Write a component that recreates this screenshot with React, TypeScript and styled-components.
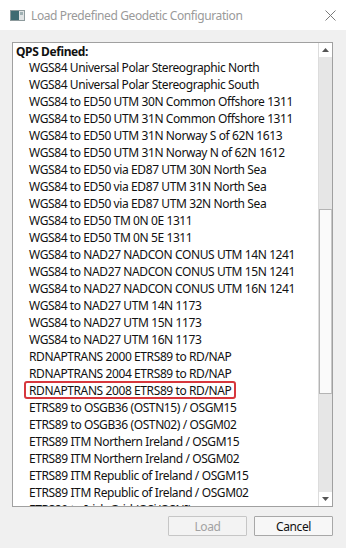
import styled, { createGlobalStyle } from "styled-components";

const GlobalStyle = createGlobalStyle`
  html, body {
    margin: 0;
    padding: 0;
    background: #f0f0f0;
  }
  * {
    box-sizing: border-box;
  }
`;

const Window = styled.div`
  width: 346px;
  height: 548px;
  display: flex;
  flex-direction: column;
  background: #f0f0f0;
  font-family: "Noto Sans", "Open Sans", sans-serif;
  font-size: 12px;
  letter-spacing: -0.4px;
  color: #111;
  overflow: hidden;
`;

const TitleBar = styled.div`
  height: 30px;
  flex: none;
  background: #ffffff;
  display: flex;
  align-items: center;
  padding: 0 10px;
`;

const TitleText = styled.div`
  flex: 1;
  margin-left: 6px;
  color: #9a9a9a;
  font-size: 12px;
  white-space: nowrap;
`;

const Body = styled.div`
  flex: 1;
  display: flex;
  flex-direction: column;
  padding: 12px 13px 12px 12px;
  min-height: 0;
`;

const ListBox = styled.div`
  height: 465px;
  flex: none;
  display: flex;
  background: #ffffff;
  border: 1px solid #a0a0a0;
`;

const ListContent = styled.div`
  flex: 1;
  overflow: hidden;
`;

const Header = styled.div`
  height: 16px;
  line-height: 18px;
  padding-left: 3px;
  font-weight: bold;
  white-space: nowrap;
`;

const Row = styled.div<{ $marked?: boolean }>`
  position: relative;
  height: 17px;
  line-height: 17px;
  white-space: nowrap;
  padding-left: 16px;
  width: ${(p) => (p.$marked ? "fit-content" : "auto")};

  &::after {
    content: "";
    display: ${(p) => (p.$marked ? "block" : "none")};
    position: absolute;
    top: -1px;
    bottom: 0px;
    left: 11px;
    right: -5px;
    border: 2px solid #d7373d;
    border-radius: 3px;
  }
`;

const ScrollBar = styled.div`
  width: 14px;
  flex: none;
  display: flex;
  flex-direction: column;
  border-left: 1px solid #dcdcdc;
  background: #e6e6e6;
`;

const Arrow = styled.div`
  height: 14px;
  flex: none;
  background: #ffffff;
  display: flex;
  align-items: center;
  justify-content: center;
`;

const Track = styled.div<{ $size: number }>`
  height: ${(p) => p.$size}px;
  flex: none;
  background: #e6e6e6;
`;

const Thumb = styled.div`
  flex: 1;
  background: #fafafa;
  border: 1px solid #b4b4b4;
  border-right-color: #c8c8c8;
`;

const Footer = styled.div`
  display: flex;
  justify-content: flex-end;
  gap: 7px;
  padding-top: 9px;
`;

const Button = styled.button<{ $disabled?: boolean }>`
  width: 79px;
  height: 20px;
  padding: 0;
  font-family: inherit;
  font-size: 12px;
  letter-spacing: inherit;
  border: 1px solid ${(p) => (p.$disabled ? "#c6c6c6" : "#a8a8a8")};
  background: ${(p) => (p.$disabled ? "#f3f3f3" : "#f7f7f7")};
  color: ${(p) => (p.$disabled ? "#a2a2a2" : "#111")};
  border-radius: 1px;
`;

const items = [
  "WGS84 Universal Polar Stereographic North",
  "WGS84 Universal Polar Stereographic South",
  "WGS84 to ED50 UTM 30N Common Offshore 1311",
  "WGS84 to ED50 UTM 31N Common Offshore 1311",
  "WGS84 to ED50 UTM 31N Norway S of 62N 1613",
  "WGS84 to ED50 UTM 31N Norway N of 62N 1612",
  "WGS84 to ED50 via ED87 UTM 30N North Sea",
  "WGS84 to ED50 via ED87 UTM 31N North Sea",
  "WGS84 to ED50 via ED87 UTM 32N North Sea",
  "WGS84 to ED50 TM 0N 0E 1311",
  "WGS84 to ED50 TM 0N 5E 1311",
  "WGS84 to NAD27 NADCON CONUS UTM 14N 1241",
  "WGS84 to NAD27 NADCON CONUS UTM 15N 1241",
  "WGS84 to NAD27 NADCON CONUS UTM 16N 1241",
  "WGS84 to NAD27 UTM 14N 1173",
  "WGS84 to NAD27 UTM 15N 1173",
  "WGS84 to NAD27 UTM 16N 1173",
  "RDNAPTRANS 2000 ETRS89 to RD/NAP",
  "RDNAPTRANS 2004 ETRS89 to RD/NAP",
  "RDNAPTRANS 2008 ETRS89 to RD/NAP",
  "ETRS89 to OSGB36 (OSTN15) / OSGM15",
  "ETRS89 to OSGB36 (OSTN02) / OSGM02",
  "ETRS89 ITM Northern Ireland / OSGM15",
  "ETRS89 ITM Northern Ireland / OSGM02",
  "ETRS89 ITM Republic of Ireland / OSGM15",
  "ETRS89 ITM Republic of Ireland / OSGM02",
  "ETRS89 to Irish Grid (OSi/OSNI)",
];

const AppIcon = () => (
  <svg width="15" height="11" viewBox="0 0 15 11">
    <rect x="0.5" y="0.5" width="14" height="10" fill="#dfe3e4" stroke="#8d9a9c" />
    <rect x="1" y="1" width="8" height="9" fill="#3f6b72" />
    <rect x="10" y="2" width="3" height="3" fill="#9fb0b3" />
  </svg>
);

const CloseIcon = () => (
  <svg width="11" height="11" viewBox="0 0 11 11">
    <path d="M0.5 0.5 L10.5 10.5 M10.5 0.5 L0.5 10.5" stroke="#7a7a7a" strokeWidth="1" />
  </svg>
);

const ArrowIcon = ({ down }: { down?: boolean }) => (
  <svg width="7" height="4" viewBox="0 0 7 4">
    <path d={down ? "M0 0 H7 L3.5 4 Z" : "M0 4 H7 L3.5 0 Z"} fill="#555" />
  </svg>
);

const App = () => {
  return (
    <Window>
      <GlobalStyle />
      <TitleBar>
        <AppIcon />
        <TitleText>Load Predefined Geodetic Configuration</TitleText>
        <CloseIcon />
      </TitleBar>
      <Body>
        <ListBox>
          <ListContent>
            <Header>QPS Defined:</Header>
            {items.map((item, index) => (
              <Row key={index} $marked={item.startsWith("RDNAPTRANS 2008")}>
                {item}
              </Row>
            ))}
          </ListContent>
          <ScrollBar>
            <Arrow>
              <ArrowIcon />
            </Arrow>
            <Track $size={152} />
            <Thumb />
            <Track $size={98} />
            <Arrow>
              <ArrowIcon down />
            </Arrow>
          </ScrollBar>
        </ListBox>
        <Footer>
          <Button $disabled>Load</Button>
          <Button>Cancel</Button>
        </Footer>
      </Body>
    </Window>
  );
};

export default App;
